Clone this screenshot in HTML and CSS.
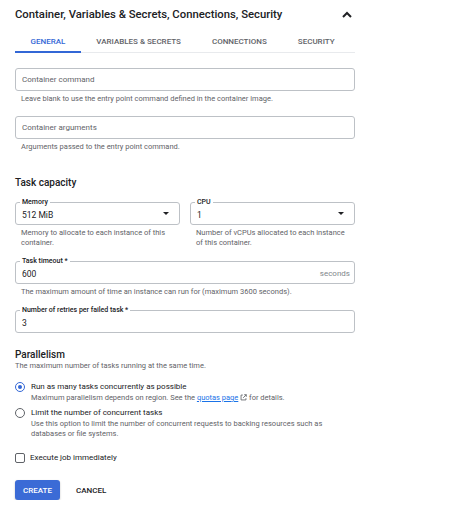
FILE: index.html
```html
<!DOCTYPE html>
<html lang="en">
<head>
  <meta charset="UTF-8">
  <title>Create job</title>
  <link rel="stylesheet" href="styles.css">
</head>
<body>
  <div class="panel">
    <!-- section header -->
    <div class="header">
      <h2>Container, Variables &amp; Secrets, Connections, Security</h2>
      <svg class="chevron" width="10" height="7" viewBox="0 0 10 7"><path d="M1 6 L5 2 L9 6" fill="none" stroke="#202124" stroke-width="2"/></svg>
    </div>

    <div class="tabs">
      <div class="tab active">GENERAL</div>
      <div class="tab">VARIABLES &amp; SECRETS</div>
      <div class="tab">CONNECTIONS</div>
      <div class="tab">SECURITY</div>
    </div>

    <!-- container -->
    <div class="field first">
      <div class="box"><span class="placeholder">Container command</span></div>
      <p class="hint">Leave blank to use the entry point command defined in the container image.</p>
    </div>
    <div class="field second">
      <div class="box"><span class="placeholder">Container arguments</span></div>
      <p class="hint">Arguments passed to the entry point command.</p>
    </div>

    <!-- capacity -->
    <h3 class="group-title capacity">Task capacity</h3>
    <div class="pair">
      <div class="field">
        <div class="box">
          <span class="label">Memory</span>
          <span class="value">512 MiB</span>
          <span class="caret"></span>
        </div>
        <p class="hint">Memory to allocate to each instance of this container.</p>
      </div>
      <div class="field">
        <div class="box">
          <span class="label">CPU</span>
          <span class="value">1</span>
          <span class="caret"></span>
        </div>
        <p class="hint">Number of vCPUs allocated to each instance of this container.</p>
      </div>
    </div>

    <div class="field timeout">
      <div class="box">
        <span class="label">Task timeout *</span>
        <span class="value">600</span>
        <span class="suffix">seconds</span>
      </div>
      <p class="hint">The maximum amount of time an instance can run for (maximum 3600 seconds).</p>
    </div>

    <div class="field retries">
      <div class="box">
        <span class="label">Number of retries per failed task *</span>
        <span class="value">3</span>
      </div>
    </div>

    <!-- parallelism -->
    <h3 class="group-title parallel">Parallelism</h3>
    <p class="sub">The maximum number of tasks running at the same time.</p>

    <div class="option first-opt">
      <span class="radio checked"></span>
      <div>
        <div class="opt-title">Run as many tasks concurrently as possible</div>
        <p class="opt-hint">Maximum parallelism depends on region. See the <a href="#">quotas page</a>
          <svg class="ext" width="7" height="7" viewBox="0 0 10 10"><path d="M4 1.5H1.5v7h7V6" fill="none" stroke="#5f6368" stroke-width="1.2"/><path d="M6 1h3v3M9 1L4.5 5.5" fill="none" stroke="#5f6368" stroke-width="1.2"/></svg>
          for details.</p>
      </div>
    </div>
    <div class="option">
      <span class="radio"></span>
      <div>
        <div class="opt-title">Limit the number of concurrent tasks</div>
        <p class="opt-hint">Use this option to limit the number of concurrent requests to backing resources such as databases or file systems.</p>
      </div>
    </div>

    <label class="check">
      <span class="checkbox"></span>
      Execute job immediately
    </label>

    <div class="actions">
      <button class="btn primary">CREATE</button>
      <button class="btn">CANCEL</button>
    </div>
  </div>
</body>
</html>
```

FILE: styles.css
```css
body {
  margin: 0;
  background-color: #fff;
  font-family: Roboto, "Liberation Sans", sans-serif;
  color: #202124;
}
.panel {
  width: 340px;
  padding-left: 15px;
}
p, h2, h3 {
  margin: 0;
}
.header {
  height: 28px;
  display: flex;
  align-items: center;
  justify-content: space-between;
}
.header h2 {
  font-size: 11.3px;
  font-weight: 500;
}
.chevron {
  margin-right: 3px;
}
.tabs {
  display: flex;
  border-bottom: 1px solid #e8eaed;
}
.tab {
  font-size: 8px;
  font-weight: 500;
  color: #5f6368;
  line-height: 10px;
  padding: 9px 15.5px 4px;
  border-bottom: 2px solid transparent;
  margin-bottom: -1px;
}
.tab.active {
  color: #3367d6;
  border-bottom-color: #3367d6;
}
.field {
  margin-top: 13px;
}
.field.first {
  margin-top: 15px;
}
.field.second {
  margin-top: 12px;
}
.box {
  position: relative;
  height: 21px;
  border: 1px solid #bdc1c6;
  border-radius: 3px;
  display: flex;
  align-items: center;
  padding: 0 6px;
  font-size: 8.5px;
}
.placeholder {
  color: #5f6368;
  font-size: 8px;
}
.value {
  flex: 1;
  margin-top: 2px;
}
.label {
  position: absolute;
  top: -6px;
  left: 4px;
  padding: 0 2px;
  background: #fff;
  font-size: 7px;
  font-weight: 500;
  line-height: 10px;
}
.caret {
  width: 0;
  height: 0;
  border-left: 3.5px solid transparent;
  border-right: 3.5px solid transparent;
  border-top: 3.5px solid #202124;
  margin-right: 4px;
}
.suffix {
  color: #80868b;
  font-size: 8px;
  margin-top: 2px;
  margin-right: -2px;
}
.hint {
  font-size: 7.5px;
  line-height: 10px;
  color: #5f6368;
  padding: 0 6px;
  margin-top: 3px;
}
.group-title {
  font-size: 10px;
  font-weight: 500;
  line-height: 12px;
}
.capacity {
  margin-top: 25px;
}
.pair {
  display: flex;
  gap: 10px;
}
.pair .field {
  flex: 1;
}
.timeout {
  margin-top: 13px;
}
.retries {
  margin-top: 13px;
}
.parallel {
  margin-top: 16px;
}
.sub {
  font-size: 7.5px;
  line-height: 10px;
  color: #5f6368;
}
.option {
  display: flex;
  gap: 6px;
  margin-top: 4px;
}
.option.first-opt {
  margin-top: 10px;
}
.radio {
  flex: none;
  box-sizing: border-box;
  width: 10px;
  height: 10px;
  margin-top: 1px;
  border: 1.3px solid #5f6368;
  border-radius: 50%;
  position: relative;
}
.radio.checked {
  border-color: #3367d6;
}
.radio.checked::after {
  content: "";
  position: absolute;
  left: 1.5px;
  top: 1.5px;
  width: 4.4px;
  height: 4.4px;
  border-radius: 50%;
  background: #3367d6;
}
.opt-title {
  font-size: 8px;
  line-height: 12px;
}
.opt-hint {
  font-size: 7.5px;
  line-height: 10px;
  color: #5f6368;
}
.opt-hint a {
  color: #1a73e8;
}
.ext {
  vertical-align: -0.5px;
}
.check {
  display: flex;
  align-items: center;
  gap: 5px;
  font-size: 8px;
  line-height: 12px;
  margin-top: 13px;
}
.checkbox {
  box-sizing: border-box;
  width: 10px;
  height: 10px;
  border: 1.3px solid #5f6368;
  border-radius: 2px;
}
.actions {
  display: flex;
  align-items: center;
  gap: 8px;
  margin-top: 16px;
}
.btn {
  font-family: inherit;
  font-size: 8px;
  font-weight: 500;
  height: 20px;
  padding: 0 8px;
  border: none;
  border-radius: 3px;
  background: none;
  color: #202124;
  cursor: pointer;
}
.btn.primary {
  background: #3b6bd6;
  color: #fff;
  box-shadow: 0 1px 2px rgba(0,0,0,0.25);
}
```
